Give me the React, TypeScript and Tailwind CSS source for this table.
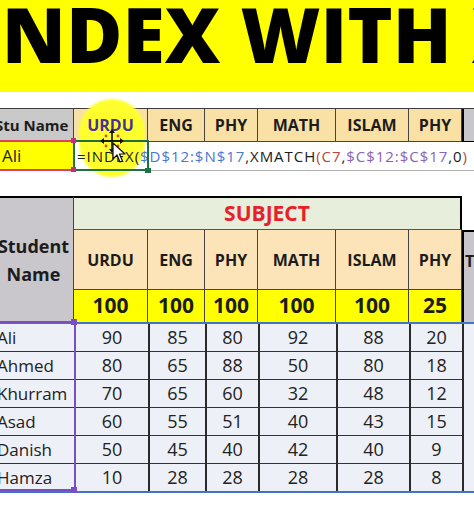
import React from 'react';

const cols = 'grid grid-cols-[80px_74px_57px_53px_78px_73px_53px_12px]';
const subjects = ['URDU', 'ENG', 'PHY', 'MATH', 'ISLAM', 'PHY'];
const totals = ['100', '100', '100', '100', '100', '25'];

const students = [
  { name: 'Ali', marks: [90, 85, 80, 92, 88, 20] },
  { name: 'Ahmed', marks: [80, 65, 88, 50, 80, 18] },
  { name: 'Khurram', marks: [70, 65, 60, 32, 48, 12] },
  { name: 'Asad', marks: [60, 55, 51, 40, 43, 15] },
  { name: 'Danish', marks: [50, 45, 40, 42, 40, 9] },
  { name: 'Hamza', marks: [10, 28, 28, 28, 28, 8] },
];

const Cursor = () => (
  <svg width="34" height="36" viewBox="0 0 34 36" className="absolute left-[96px] top-[128px] z-30">
    {/* move cross */}
    <g stroke="#111" strokeWidth="1.6" fill="none">
      <line x1="6" y1="13" x2="26" y2="13" />
      <line x1="16" y1="3" x2="16" y2="23" />
    </g>
    <g fill="#111">
      <polygon points="4,13 8,10 8,16" />
      <polygon points="28,13 24,10 24,16" />
      <polygon points="16,1 13,5 19,5" />
      <polygon points="16,25 13,21 19,21" />
    </g>
    <g fill="#e0482a">
      <circle cx="10" cy="8" r="1.4" />
      <circle cx="22" cy="8" r="1.4" />
      <circle cx="10" cy="18" r="1.4" />
      <circle cx="22" cy="18" r="1.4" />
    </g>
    {/* arrow pointer */}
    <path
      d="M17 15 L17 31 L21 27 L24 34 L26.5 33 L23.5 26 L29 26 Z"
      fill="#fff"
      stroke="#111"
      strokeWidth="1.2"
      strokeLinejoin="round"
    />
  </svg>
);

export default function App() {
  return (
    <div className="relative w-[474px] h-[505px] overflow-hidden bg-white font-['Open_Sans',sans-serif] text-[#1c1c1c]">
      {/* Title banner */}
      <div className="h-[92px] bg-[#ffff00] overflow-hidden">
        <div className="ml-[-25px] mt-[-5px] whitespace-nowrap text-[77px] leading-none font-extrabold text-black">
          INDEX WITH XMATCH
        </div>
      </div>

      {/* Lookup table */}
      <div className="ml-[-6px] w-[480px] mt-4 border-t border-[#3c3c3c]">
        <div className={`${cols} h-[33px]`}>
          <div className="bg-[#c9c9c9] border-r border-b border-[#444] flex items-center pl-[1px] text-[15px] font-bold whitespace-nowrap">
            Stu Name
          </div>
          {subjects.map((s, i) => (
            <div
              key={i}
              className="bg-[#f9e1a6] border-r border-b border-[#444] flex items-center justify-center text-[16px] font-bold"
            >
              <span className={i === 0 ? 'relative z-10 text-[#4b2f9e]' : ''}>{s}</span>
            </div>
          ))}
          <div className="bg-[#c8c8cc] border-l-2 border-b border-black" />
        </div>
        <div className={`${cols} h-[29px]`}>
          <div className="bg-[#ffff00] border-b border-[#b0b0b0] flex items-center pl-[8px] text-[17px]">Ali</div>
          <div className="col-span-7 bg-white border-b border-[#b0b0b0] flex items-center pl-[3px] whitespace-nowrap text-[15px] tracking-[0.95px]">
            <span className="relative z-10">
              <span>=INDEX(</span>
              <span className="text-[#4a78cc]">$D$12:$N$17</span>
              <span>,XMATCH</span>
              <span className="text-[#b5483e]">(C7</span>
              <span>,</span>
              <span className="text-[#8a62b8]">$C$12:$C$17</span>
              <span>,0</span>
              <span className="text-[#b5483e]">)</span>
            </span>
          </div>
        </div>
      </div>

      {/* Marks table */}
      <div className="ml-[-6px] w-[480px] mt-[25px]">
        <div className={`${cols} grid-rows-[34px_60px_32px]`}>
          <div className="row-span-3 bg-[#c9c7cc] border-t-2 border-t-black border-r border-r-[#444] flex items-center justify-center text-center text-[18px] leading-[28px] font-bold">
            Student
            <br />
            Name
          </div>
          <div className="col-span-6 bg-[#e7eedb] border-t-2 border-r-2 border-black border-b border-b-[#555] flex items-center justify-center text-[21px] font-bold text-[#e8202a]">
            SUBJECT
          </div>
          <div className="bg-white" />
          {subjects.map((s, i) => (
            <div
              key={i}
              className="bg-[#fde4b8] border-r border-b border-[#444] flex items-center justify-center text-[16px] font-bold"
            >
              {s}
            </div>
          ))}
          <div className="bg-[#c8c6cc] border-t-2 border-l-2 border-black flex items-center pl-[1px] text-[16px] font-bold whitespace-nowrap">
            TOTAL
          </div>
          {totals.map((t, i) => (
            <div
              key={i}
              className="bg-[#ffff00] border-r border-[#444] flex items-center justify-center text-[21px] font-bold"
            >
              {t}
            </div>
          ))}
          <div className="bg-[#c8c6cc] border-l-2 border-black" />
        </div>

        <div className="border-t-2 border-b-2 border-[#4472c4]">
          {students.map((st, r) => (
            <div key={st.name} className={`${cols} ${r === 5 ? 'h-[27px]' : 'h-[28px]'}`}>
              <div
                className={`bg-[#eef0f7] flex items-center pl-[3px] text-[17px] text-[#222] ${r < 5 ? 'border-b border-[#333]' : ''}`}
              >
                {st.name}
              </div>
              {st.marks.map((m, i) => (
                <div
                  key={i}
                  className={`bg-[#eef0f7] border-l-2 border-[#2a2a2a] flex items-center justify-center text-[18px] text-[#222] ${r < 5 ? 'border-b border-b-[#333]' : ''}`}
                >
                  {m}
                </div>
              ))}
              <div className="bg-[#eef0f7] border-l-2 border-[#2a2a2a]" />
            </div>
          ))}
        </div>
      </div>

      {/* highlight circle behind the formula */}
      <div className="absolute left-[79px] top-[99px] w-[66px] h-[78px] rounded-full bg-[#ffff2e] blur-[1px] z-[1]" />

      {/* selected cell (green) */}
      <div className="absolute left-[73px] top-[140px] w-[76px] h-[31px] border-2 border-[#1e7145] z-20" />
      <div className="absolute left-[145px] top-[168px] w-[6px] h-[5px] bg-[#1e7145] z-20" />

      {/* red reference box on Ali */}
      <div className="absolute left-0 top-[140px] w-[74px] h-[2px] bg-[#d9425e] z-20" />
      <div className="absolute left-0 top-[169px] w-[74px] h-[2px] bg-[#d9425e] z-20" />
      <div className="absolute left-[71px] top-[138px] w-[5px] h-[5px] bg-[#c0307a] z-20" />
      <div className="absolute left-[71px] top-[167px] w-[5px] h-[5px] bg-[#c0307a] z-20" />

      {/* purple reference box on names */}
      <div className="absolute left-0 top-[321px] w-[76px] h-[170px] border-2 border-l-0 border-[#7b4fc4] z-20" />
      <div className="absolute left-[71px] top-[319px] w-[6px] h-[6px] bg-[#7b4fc4] z-20" />
      <div className="absolute left-[71px] top-[487px] w-[6px] h-[6px] bg-[#7b4fc4] z-20" />

      <Cursor />
    </div>
  );
}
